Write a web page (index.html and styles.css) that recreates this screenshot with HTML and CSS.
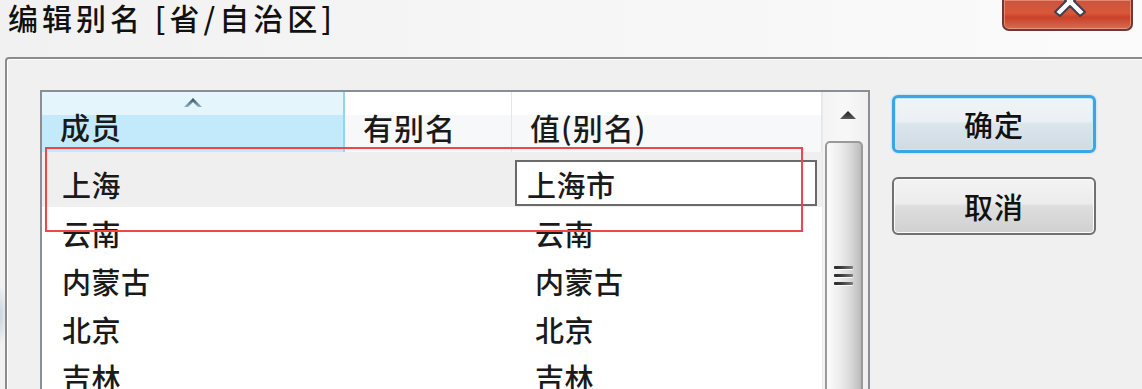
FILE: index.html
```html
<!DOCTYPE html>
<html lang="zh-CN">
<head>
<meta charset="utf-8">
<title>编辑别名</title>
<link rel="stylesheet" href="styles.css">
</head>
<body>
<div class="window">
  <div class="titlebar">
    <div class="title">编辑别名 [省/自治区]</div>
    <div class="close-btn">
      <svg class="close-x" width="48" height="28" viewBox="0 0 48 28">
        <path d="M9 -10 L20 1 L9 12 L14 16 L24 6 L34 16 L39 12 L28 1 L39 -10 L34 -14 L24 -4 L14 -14 Z" fill="#ffffff" stroke="#3a4250" stroke-width="2" stroke-linejoin="round"/>
      </svg>
    </div>
  </div>
  <div class="panel">
    <div class="listbox">
      <div class="list-main">
        <div class="header">
          <div class="hcell col1 sorted">
            <svg class="sort-arrow" width="20" height="12" viewBox="0 0 20 12">
              <defs>
                <linearGradient id="sg" x1="0" y1="0" x2="0" y2="1">
                  <stop offset="0" stop-color="#2f4a5c"/>
                  <stop offset="1" stop-color="#8fb3c6"/>
                </linearGradient>
              </defs>
              <path d="M1 11 L10 2 L19 11 L15 11 L10 6 L5 11 Z" fill="url(#sg)"/>
            </svg>
            <span class="htext">成员</span>
          </div>
          <div class="hcell col2"><span class="htext">有别名</span></div>
          <div class="hcell col3"><span class="htext">值(别名)</span></div>
        </div>
        <div class="row row-edit">
          <div class="cell col1"><span class="ctext">上海</span></div>
          <div class="cell col2"></div>
          <div class="cell col3">
            <div class="editbox"><span class="etext">上海市</span></div>
          </div>
        </div>
        <div class="row">
          <div class="cell col1">云南</div>
          <div class="cell col2"></div>
          <div class="cell col3 val">云南</div>
        </div>
        <div class="row">
          <div class="cell col1">内蒙古</div>
          <div class="cell col2"></div>
          <div class="cell col3 val">内蒙古</div>
        </div>
        <div class="row">
          <div class="cell col1">北京</div>
          <div class="cell col2"></div>
          <div class="cell col3 val">北京</div>
        </div>
        <div class="row">
          <div class="cell col1">吉林</div>
          <div class="cell col2"></div>
          <div class="cell col3 val">吉林</div>
        </div>
      </div>
      <div class="scrollbar">
        <div class="sb-up">
          <svg width="18" height="10" viewBox="0 0 18 10">
            <defs>
              <linearGradient id="ag" x1="0" y1="0" x2="0" y2="1">
                <stop offset="0" stop-color="#1e1e1e"/>
                <stop offset="1" stop-color="#5a5a5a"/>
              </linearGradient>
            </defs>
            <path d="M1 9 L9 1 L17 9 Z" fill="url(#ag)"/>
          </svg>
        </div>
        <div class="sb-thumb">
          <div class="grip">
            <span class="grip-line"></span>
            <span class="grip-line"></span>
            <span class="grip-line"></span>
          </div>
        </div>
      </div>
    </div>
    <div class="buttons">
      <div class="btn btn-default">确定</div>
      <div class="btn">取消</div>
    </div>
  </div>
  <div class="annotation"></div>
</div>
</body>
</html>
```

FILE: styles.css
```css
html, body {
  margin: 0;
  padding: 0;
}

body {
  width: 1142px;
  height: 389px;
  overflow: hidden;
  font-family: "Noto Sans CJK SC", "Microsoft YaHei", sans-serif;
  font-weight: 500;
  color: #1a1a1a;
  background:
    radial-gradient(ellipse 8px 30px at 0px 315px, rgba(120,160,190,0.35), rgba(120,160,190,0) 100%),
    radial-gradient(ellipse 10px 40px at 1142px 315px, rgba(120,160,190,0.35), rgba(120,160,190,0) 100%),
    linear-gradient(to right, #f1f1f1 0%, #f7f7f7 60%, #fbfbfb 100%);
}

.window {
  position: relative;
  width: 1142px;
  height: 389px;
}

/* ---------- title bar ---------- */
.titlebar {
  height: 57px;
  display: flex;
  justify-content: space-between;
  align-items: flex-start;
}

.title {
  margin-left: 8px;
  margin-top: -2px;
  font-size: 30px;
  line-height: 38px;
  letter-spacing: 4px;
  color: #111;
  white-space: nowrap;
}

.close-btn {
  width: 127px;
  height: 29px;
  margin-right: 9px;
  margin-left: auto;
  border: 2px solid #6e3a34;
  border-top: none;
  border-radius: 0 0 7px 7px;
  background: linear-gradient(to bottom, #c9553f 0%, #d9573a 45%, #c8422a 60%, #d96b52 100%);
  box-shadow: inset 0 0 0 1px rgba(255,200,180,0.45);
  display: flex;
  justify-content: center;
  align-items: flex-start;
}

.close-x {
  display: block;
  margin-left: 4px;
}

/* ---------- panel ---------- */
.panel {
  margin-left: 5px;
  width: 1124px;
  height: 340px;
  border: 2px solid #8b8b8b;
  border-bottom: none;
  border-radius: 4px 4px 0 0;
  background: #f0f0f0;
  box-shadow: inset 1px 1px 0 #ffffff;
  padding: 31px 0 0 33px;
  box-sizing: content-box;
  display: flex;
  align-items: flex-start;
  gap: 22px;
}

/* ---------- list box ---------- */
.listbox {
  width: 826px;
  height: 320px;
  border: 2px solid #8a8f96;
  background: #ffffff;
  display: flex;
  flex-shrink: 0;
}

.list-main {
  width: 780px;
  display: flex;
  flex-direction: column;
}

.header {
  display: flex;
  height: 61px;
  border-bottom: 1px solid #eef0f2;
  box-sizing: border-box;
}

.col1 { width: 303px; }
.col2 { width: 167px; }
.col3 { width: 310px; }

.hcell {
  box-sizing: border-box;
  display: flex;
  flex-direction: column;
  padding-left: 18px;
  background: linear-gradient(to bottom, #ffffff 0%, #ffffff 38%, #f7f8f9 38%, #f7f8f9 100%);
  border-right: 1px solid #e3e6ea;
  font-size: 30px;
  line-height: 34px;
  letter-spacing: 1px;
}

.hcell .htext {
  margin-top: 18px;
}

.hcell.sorted {
  background: linear-gradient(to bottom, #e4f5fc 0%, #e4f5fc 38%, #c3eafa 38%, #c3eafa 100%);
  border-right: 2px solid #97d2ee;
  padding-left: 18px;
}

.hcell.sorted .sort-arrow {
  display: block;
  align-self: center;
  margin-top: 4px;
  margin-left: -18px;
}

.hcell.sorted .htext {
  margin-top: 1px;
}

.row {
  display: flex;
  height: 48px;
  font-size: 29px;
  line-height: 34px;
  letter-spacing: 0.5px;
}

.cell {
  box-sizing: border-box;
  padding-top: 9px;
  padding-left: 20px;
  white-space: nowrap;
}

.cell.val {
  padding-left: 23px;
}

.row-edit {
  height: 54px;
  background: #efefef;
}

.row-edit .cell {
  padding-top: 14px;
}

.row-edit .col3 {
  padding: 7px 0 0 3px;
}

.editbox {
  width: 302px;
  height: 46px;
  box-sizing: border-box;
  border: 2px solid #6a6a6a;
  background: #ffffff;
  padding: 5px 0 0 10px;
}

/* ---------- scrollbar ---------- */
.scrollbar {
  width: 46px;
  flex-shrink: 0;
  border-left: 1px solid #eaeaea;
  box-sizing: border-box;
  background: linear-gradient(to right, #f3f3f3 0%, #f8f8f8 50%, #efefef 100%);
  display: flex;
  flex-direction: column;
}

.sb-up {
  height: 53px;
  display: flex;
  justify-content: center;
  align-items: center;
  padding-left: 4px;
  box-sizing: border-box;
}

.sb-up svg {
  display: block;
  margin-top: -2px;
}

.sb-thumb {
  margin-left: 2px;
  width: 38px;
  height: 296px;
  box-sizing: border-box;
  border: 2px solid #9a9a9a;
  border-radius: 5px;
  background: linear-gradient(to right, #fbfbfb 0%, #eeeeee 35%, #dcdcdc 65%, #c6c6c6 90%, #b9b9b9 100%);
  display: flex;
  justify-content: center;
  align-items: center;
}

.grip {
  display: flex;
  flex-direction: column;
  gap: 5px;
  margin-top: -2px;
  margin-left: -2px;
}

.grip-line {
  display: block;
  width: 19px;
  height: 3px;
  border-radius: 1px;
  background: linear-gradient(to right, #2a2a2a 0%, #3e3e3e 40%, #7c7c7c 100%);
  box-shadow: 0 1px 0 rgba(255,255,255,0.8);
}

/* ---------- buttons ---------- */
.buttons {
  margin-top: 5px;
  display: flex;
  flex-direction: column;
  gap: 24px;
}

.btn {
  width: 204px;
  height: 58px;
  box-sizing: border-box;
  border: 2px solid #707070;
  border-radius: 6px;
  background: linear-gradient(to bottom, #f3f3f3 0%, #ececec 45%, #dedede 50%, #d0d0d0 100%);
  box-shadow: inset 0 0 0 1px #fbfbfb;
  display: flex;
  justify-content: center;
  align-items: center;
  font-size: 29px;
  line-height: 34px;
  letter-spacing: 1px;
  color: #111;
}

.btn-default {
  border: 3px solid #3aa6e6;
  background: linear-gradient(to bottom, #f1f4f6 0%, #eaf0f4 45%, #dbe5ec 50%, #cfdbe3 100%);
  box-shadow: inset 0 0 0 1px #c6ecfc, 0 0 2px rgba(60,170,230,0.5);
}

/* ---------- red annotation ---------- */
.annotation {
  position: absolute;
  left: 45px;
  top: 147px;
  width: 758px;
  height: 85px;
  box-sizing: border-box;
  border: 2px solid #f0464a;
  pointer-events: none;
}
```
